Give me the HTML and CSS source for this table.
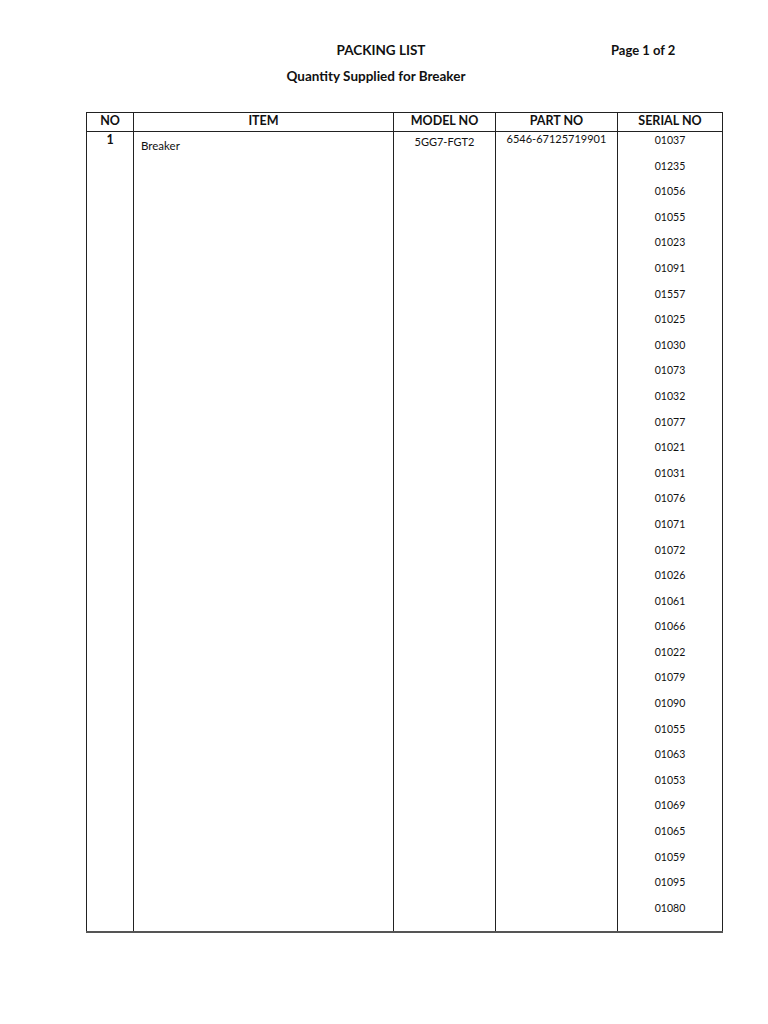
FILE: index.html
```html
<!DOCTYPE html>
<html>
<head>
<meta charset="utf-8">
<link rel="stylesheet" href="styles.css">
</head>
<body>
<div class="page">
  <div class="heading-row">
    <div class="doc-title">PACKING LIST</div>
    <div class="page-no">Page 1 of 2</div>
  </div>
  <div class="heading-row">
    <div class="subtitle">Quantity Supplied for Breaker</div>
  </div>
  <table class="list">
    <colgroup>
      <col class="c-no"><col class="c-item"><col class="c-model"><col class="c-part"><col class="c-serial">
    </colgroup>
    <thead>
      <tr><th>NO</th><th>ITEM</th><th>MODEL NO</th><th>PART NO</th><th>SERIAL NO</th></tr>
    </thead>
    <tbody>
      <tr>
        <td class="no">1</td>
        <td class="item">Breaker</td>
        <td class="model">5GG7-FGT2</td>
        <td class="part">6546-67125719901</td>
        <td class="serial">
          <div>01037</div><div>01235</div><div>01056</div><div>01055</div><div>01023</div>
          <div>01091</div><div>01557</div><div>01025</div><div>01030</div><div>01073</div>
          <div>01032</div><div>01077</div><div>01021</div><div>01031</div><div>01076</div>
          <div>01071</div><div>01072</div><div>01026</div><div>01061</div><div>01066</div>
          <div>01022</div><div>01079</div><div>01090</div><div>01055</div><div>01063</div>
          <div>01053</div><div>01069</div><div>01065</div><div>01059</div><div>01095</div>
          <div>01080</div>
        </td>
      </tr>
    </tbody>
  </table>
</div>
</body>
</html>
```

FILE: styles.css
```css
html, body {
  margin: 0;
  padding: 0;
  background: #ffffff;
}
body {
  font-family: Lato, "Liberation Sans", sans-serif;
  color: #111111;
}
.page {
  width: 768px;
  height: 1024px;
  box-sizing: border-box;
  padding: 41px 46px 0 86px;
}
.heading-row {
  display: flex;
  align-items: baseline;
}
.doc-title {
  width: 400px;
  margin-left: 95px;
  text-align: center;
  font-weight: bold;
  font-size: 13.5px;
  line-height: 18px;
}
.page-no {
  margin-left: 30px;
  font-weight: bold;
  font-size: 13px;
  line-height: 18px;
}
.subtitle {
  width: 400px;
  margin-left: 90px;
  margin-top: 8px;
  text-align: center;
  font-weight: bold;
  font-size: 13.5px;
  line-height: 18px;
}
.list {
  margin-top: 27px;
  width: 636px;
  border-collapse: collapse;
  table-layout: fixed;
  border: 1px solid #222222;
  border-bottom: 2px solid #555555;
}
.c-no { width: 47px; }
.c-item { width: 260px; }
.c-model { width: 102px; }
.c-part { width: 122px; }
.c-serial { width: 105px; }
.list th {
  border: 1px solid #222222;
  height: 18px;
  padding: 0;
  font-size: 12.5px;
  font-weight: bold;
  line-height: 16px;
  text-align: center;
  vertical-align: top;
}
.list td {
  border-left: 1px solid #222222;
  border-right: 1px solid #222222;
  height: 792px;
  padding: 0;
  vertical-align: top;
  font-size: 10.5px;
  line-height: 14px;
}
.list td.no {
  text-align: center;
  font-weight: bold;
  font-size: 12.5px;
  padding-top: 1px;
}
.list td.item {
  padding-top: 7px;
  padding-left: 7px;
  font-size: 11.5px;
}
.list td.model {
  text-align: center;
  padding-top: 3px;
  font-size: 11px;
}
.list td.part {
  text-align: center;
  padding-top: 0px;
  font-size: 11px;
}
.list td.serial {
  text-align: center;
  padding-top: 1px;
}
.serial div {
  height: 25.6px;
  line-height: 14px;
}
```
